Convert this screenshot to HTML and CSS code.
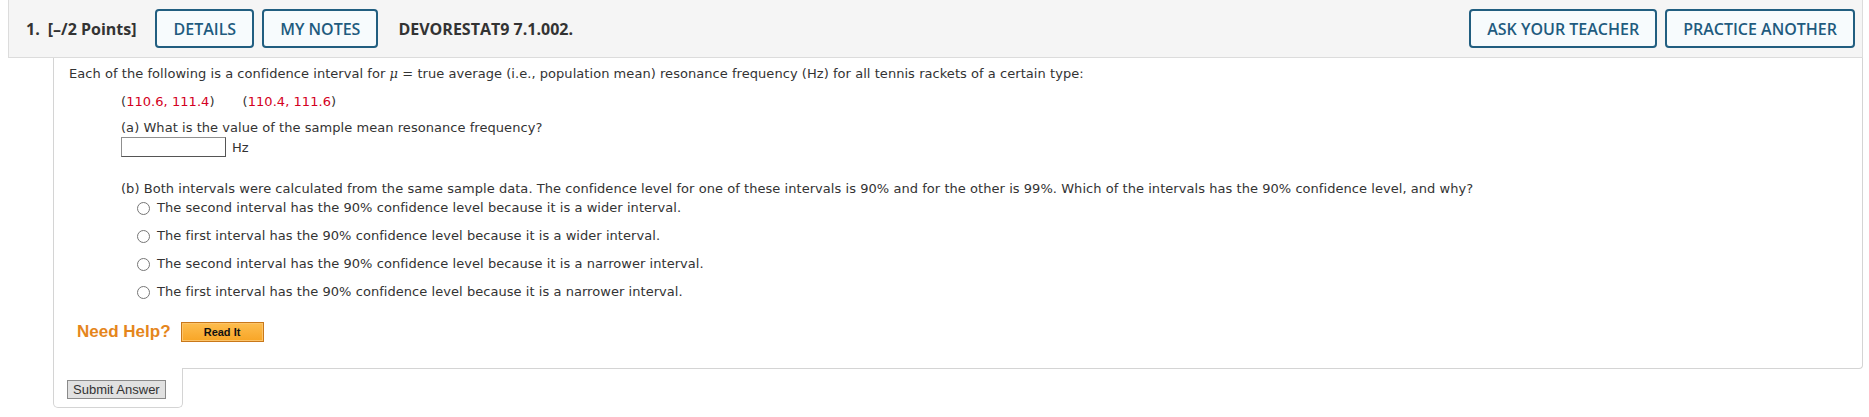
FILE: index.html
```html
<!DOCTYPE html>
<html>
<head>
<meta charset="utf-8">
<link rel="stylesheet" href="styles.css">
</head>
<body>
<div class="header">
  <div class="qnum"><span class="num">1.</span><span class="pts">[–/2 Points]</span></div>
  <button class="hbtn">DETAILS</button>
  <button class="hbtn">MY NOTES</button>
  <div class="qid">DEVORESTAT9 7.1.002.</div>
  <div class="spacer"></div>
  <button class="hbtn">ASK YOUR TEACHER</button>
  <button class="hbtn">PRACTICE ANOTHER</button>
</div>
<div class="panel">
  <p class="line first">Each of the following is a confidence interval for <i class="mu">μ</i> = true average (i.e., population mean) resonance frequency (Hz) for all tennis rackets of a certain type:</p>
  <div class="indent">
    <p class="line intervals"><span class="iv">(<span class="red">110.6, 111.4</span>)</span><span class="iv">(<span class="red">110.4, 111.6</span>)</span></p>
    <p class="line parta">(a) What is the value of the sample mean resonance frequency?</p>
    <div class="answer"><span class="box"></span><span class="unit">Hz</span></div>
    <p class="line partb">(b) Both intervals were calculated from the same sample data. The confidence level for one of these intervals is 90% and for the other is 99%. Which of the intervals has the 90% confidence level, and why?</p>
    <ul class="options">
      <li class="opt"><span class="radio"></span>The second interval has the 90% confidence level because it is a wider interval.</li>
      <li class="opt"><span class="radio"></span>The first interval has the 90% confidence level because it is a wider interval.</li>
      <li class="opt"><span class="radio"></span>The second interval has the 90% confidence level because it is a narrower interval.</li>
      <li class="opt"><span class="radio"></span>The first interval has the 90% confidence level because it is a narrower interval.</li>
    </ul>
  </div>
  <div class="help"><span class="needhelp">Need Help?</span><button class="readit">Read It</button></div>
</div>
<div class="submitbox"><button class="submit">Submit Answer</button></div>
</body>
</html>
```

FILE: styles.css
```css
html, body {
  background: #ffffff;
}
body {
  margin: 0 6px 0 8px;
  font-family: "DejaVu Sans", Verdana, sans-serif;
  color: #333333;
}
.header {
  display: flex;
  align-items: center;
  height: 57px;
  background: #f5f5f5;
  border: 1px solid #dcdcdc;
  border-top: none;
  padding: 0 7px 0 17px;
  font-family: "Open Sans", sans-serif;
  font-size: 16px;
}
.qnum {
  font-weight: 700;
  color: #333333;
  margin-right: 19px;
  white-space: nowrap;
}
.num {
  margin-right: 8px;
}
.hbtn {
  height: 39px;
  box-sizing: border-box;
  border: 2px solid #215e80;
  border-radius: 4px;
  background: #f7fbfd;
  color: #1f5b7f;
  font-family: "Open Sans", sans-serif;
  font-size: 16px;
  font-weight: 600;
  padding: 0 16px;
  margin-right: 8px;
  white-space: nowrap;
}
.hbtn:last-child {
  margin-right: 0;
}
.qid {
  font-weight: 700;
  color: #333333;
  margin-left: 12px;
  white-space: nowrap;
}
.spacer {
  flex: 1;
}
.panel {
  margin-left: 45px;
  border: 1px solid #d4d4d4;
  border-top: none;
  border-bottom-right-radius: 4px;
  padding: 8px 15px 26px;
  font-size: 13px;
  letter-spacing: 0.05px;
}
.line {
  margin: 0;
  line-height: 16px;
}
.mu {
  font-family: "DejaVu Serif", serif;
  font-style: italic;
}
.indent {
  padding-left: 52px;
}
.intervals {
  margin-top: 12px;
}
.iv {
  margin-right: 28px;
}
.red {
  color: #d40022;
}
.parta {
  margin-top: 10px;
}
.answer {
  display: flex;
  align-items: center;
  margin-top: 1px;
  height: 20px;
}
.box {
  width: 103px;
  height: 18px;
  border: 1px solid #8f8f8f;
  border-right-color: #555;
  border-bottom-color: #555;
  background: #fff;
}
.unit {
  margin-left: 6px;
}
.partb {
  margin-top: 24px;
}
.options {
  list-style: none;
  margin: 3px 0 0;
  padding: 0 0 0 16px;
}
.opt {
  display: flex;
  align-items: center;
  line-height: 16px;
  margin-bottom: 12px;
}
.opt:last-child {
  margin-bottom: 0;
}
.radio {
  width: 11px;
  height: 11px;
  border: 1px solid #767676;
  border-radius: 50%;
  background: #fff;
  margin-right: 7px;
  flex: none;
}
.help {
  display: flex;
  align-items: center;
  height: 20px;
  margin-top: 22px;
  padding-left: 8px;
}
.needhelp {
  font-family: "Liberation Sans", Arial, sans-serif;
  font-weight: 700;
  font-size: 17px;
  color: #e5861c;
  margin-right: 10px;
  letter-spacing: 0;
}
.readit {
  width: 83px;
  height: 20px;
  box-sizing: border-box;
  border: 1px solid #c9781a;
  box-shadow: inset 0 0 0 1px #fcc46a;
  background: linear-gradient(#fdbd4f, #f8a526);
  font-family: "Liberation Sans", Arial, sans-serif;
  font-weight: 700;
  font-size: 11px;
  color: #111;
  padding: 0;
}
.submitbox {
  margin-top: -1px;
  margin-left: 45px;
  width: 128px;
  height: 39px;
  background: #fff;
  border: 1px solid #d4d4d4;
  border-top: none;
  border-radius: 0 0 5px 5px;
  padding: 0;
  display: flex;
  align-items: flex-start;
}
.submit {
  margin: 12px 0 0 13px;
  height: 19px;
  box-sizing: border-box;
  padding: 0 5px;
  border: 1px solid #8a8a8a;
  background: #e1e1e1;
  font-family: "Liberation Sans", Arial, sans-serif;
  font-size: 13px;
  color: #333;
  line-height: 17px;
  white-space: nowrap;
}
```
